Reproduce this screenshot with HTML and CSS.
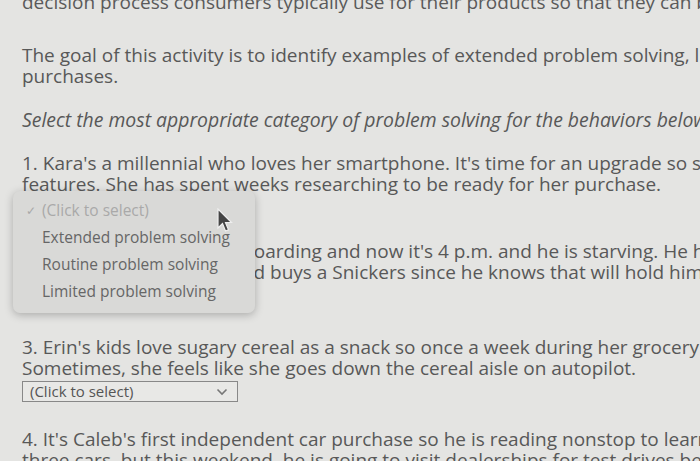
FILE: index.html
```html
<!DOCTYPE html>
<html>
<head>
<meta charset="utf-8">
<link rel="stylesheet" href="styles.css">
</head>
<body>
<div class="page">
  <p class="line top-line">decision process consumers typically use for their products so that they can better understand their customers.</p>
  <p class="para goal">The goal of this activity is to identify examples of extended problem solving, limited problem solving, and routine<br>purchases.</p>
  <p class="para instr">Select the most appropriate category of problem solving for the behaviors below.</p>

  <div class="question q1">
    <p class="qtext">1. Kara's a millennial who loves her smartphone. It's time for an upgrade so she wants the latest model with all the newest<br>features. She has spent weeks researching to be ready for her purchase.</p>
    <div class="select-wrap">
      <div class="select"><span>(Click to select)</span><svg class="chev" width="12" height="8" viewBox="0 0 12 8"><path d="M1.5 1.5 L6 6 L10.5 1.5" fill="none" stroke="#777" stroke-width="1.6"/></svg></div>
      <div class="menu">
        <div class="opt placeholder"><span class="check">✓</span>(Click to select)</div>
        <div class="opt">Extended problem solving</div>
        <div class="opt">Routine problem solving</div>
        <div class="opt">Limited problem solving</div>
        <svg class="cursor" width="18" height="26" viewBox="0 0 18 26"><path d="M2 1 L2 20 L6.5 15.5 L9.5 23 L12.5 21.8 L9.5 14.5 L15.5 14.5 Z" fill="#444" stroke="#eee" stroke-width="1.2"/></svg>
      </div>
    </div>
  </div>

  <div class="question q2">
    <p class="qtext">2. Tyler skipped lunch onboarding and now it's 4 p.m. and he is starving. He heads to the vending machine<br>He looks at the options and buys a Snickers since he knows that will hold him until dinner.</p>
    <div class="select-wrap">
      <div class="select"><span>(Click to select)</span><svg class="chev" width="12" height="8" viewBox="0 0 12 8"><path d="M1.5 1.5 L6 6 L10.5 1.5" fill="none" stroke="#777" stroke-width="1.6"/></svg></div>
    </div>
  </div>

  <div class="question q3">
    <p class="qtext">3. Erin's kids love sugary cereal as a snack so once a week during her grocery shopping trip she picks up a box.<br>Sometimes, she feels like she goes down the cereal aisle on autopilot.</p>
    <div class="select-wrap">
      <div class="select"><span>(Click to select)</span><svg class="chev" width="12" height="8" viewBox="0 0 12 8"><path d="M1.5 1.5 L6 6 L10.5 1.5" fill="none" stroke="#777" stroke-width="1.6"/></svg></div>
    </div>
  </div>

  <div class="question q4">
    <p class="qtext">4. It's Caleb's first independent car purchase so he is reading nonstop to learn everything he can. He has narrowed it to<br>three cars, but this weekend, he is going to visit dealerships for test drives before he decides.</p>
  </div>
</div>
</body>
</html>
```
FILE: styles.css
```css
html, body {
  margin: 0;
  padding: 0;
  width: 700px;
  height: 461px;
  overflow: hidden;
  background: #e4e4e2;
}
.page {
  padding-left: 22px;
  font-family: "Open Sans", "Noto Sans", sans-serif;
  font-size: 19px;
  line-height: 21px;
  color: #585858;
  white-space: nowrap;
}
p { margin: 0; }
.top-line {
  margin-top: -8px;
  color: #5a5a5a;
}
.goal { margin-top: 32px; }
.instr { margin-top: 22px; font-style: italic; font-size: 19.4px; }
.question { margin-top: 23px; }
.q3 { margin-top: 31px; }
.q4 { margin-top: 27px; }
.select-wrap { position: relative; margin-top: 2px; }
.select {
  width: 198px;
  height: 19px;
  border: 1px solid #888;
  background: #e8e8e6;
  display: flex;
  align-items: center;
  justify-content: space-between;
  padding: 0 9px 0 7px;
  font-size: 15px;
  color: #555;
}
.menu {
  position: absolute;
  z-index: 5;
  left: -9px;
  top: -6px;
  width: 242px;
  padding: 6px 0 8px;
  background: #d9d9d7;
  border-radius: 7px;
  box-shadow: 0 2px 8px rgba(0,0,0,0.25);
  font-size: 15.5px;
  color: #666;
}
.opt {
  height: 27px;
  line-height: 27px;
  padding-left: 29px;
  position: relative;
}
.placeholder { color: #a9a9a9; }
.check {
  position: absolute;
  left: 13px;
  font-size: 12px;
}
.cursor {
  position: absolute;
  left: 203px;
  top: 17px;
}
```
